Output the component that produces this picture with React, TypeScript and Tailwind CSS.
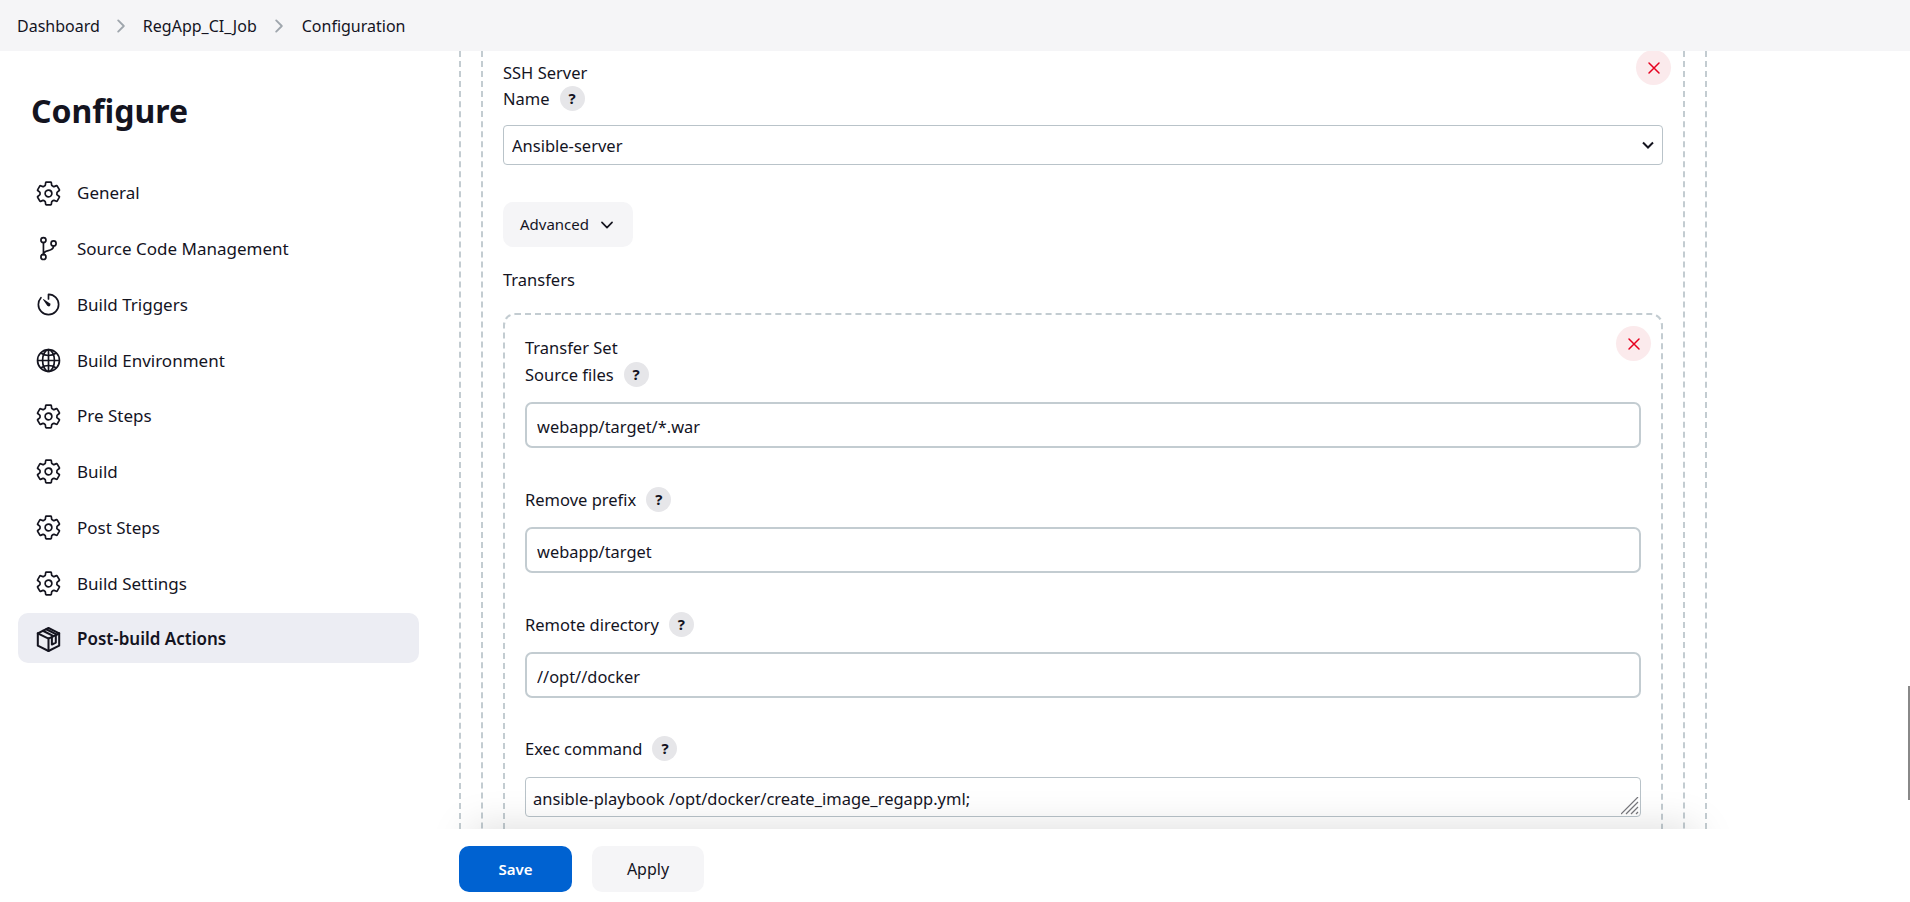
import {
  IoChevronDown,
  IoChevronForward,
  IoGitBranchOutline,
  IoGlobeOutline,
  IoSettingsOutline,
  IoTimerOutline,
} from "react-icons/io5";
import type { ReactNode } from "react";

const PackageIcon = () => (
  <svg viewBox="0 0 24 24" className="w-[27px] h-[27px] shrink-0" fill="none" stroke="currentColor" strokeWidth="1.8" strokeLinejoin="round" strokeLinecap="round">
    <path d="M12 1.8 21.5 6.5v11L12 22.2 2.5 17.5v-11z" />
    <path d="M2.5 6.5 12 11.2l9.5-4.7M12 11.2v11" />
    <path d="M7 4.2l9.5 4.8M10 2.9l9.5 4.7" />
    <path d="M15 10v6.5l3.5-1.8V8.2" />
  </svg>
);

const iconClass = "shrink-0";

const items: { label: string; icon: ReactNode; active?: boolean }[] = [
  { label: "General", icon: <IoSettingsOutline size={27} className={iconClass} /> },
  { label: "Source Code Management", icon: <IoGitBranchOutline size={27} className={iconClass} /> },
  { label: "Build Triggers", icon: <IoTimerOutline size={27} className={iconClass} /> },
  { label: "Build Environment", icon: <IoGlobeOutline size={27} className={iconClass} /> },
  { label: "Pre Steps", icon: <IoSettingsOutline size={27} className={iconClass} /> },
  { label: "Build", icon: <IoSettingsOutline size={27} className={iconClass} /> },
  { label: "Post Steps", icon: <IoSettingsOutline size={27} className={iconClass} /> },
  { label: "Build Settings", icon: <IoSettingsOutline size={27} className={iconClass} /> },
  { label: "Post-build Actions", icon: <PackageIcon />, active: true },
];

const Help = () => (
  <span className="ml-[10px] mb-[2px] w-[25px] h-[25px] rounded-full bg-[#e6e6e9] flex items-center justify-center text-[15px] font-bold">?</span>
);

const Label = ({ text }: { text: string }) => (
  <div className="flex items-center h-[26px]">
    {text}
    <Help />
  </div>
);

const Close = ({ className }: { className: string }) => (
  <button className={`absolute w-[35px] h-[35px] rounded-full bg-[#fbeaec] text-[#e6001f] flex items-center justify-center ${className}`}>
    <svg viewBox="0 0 14 14" className="w-[14px] h-[14px]" fill="none" stroke="currentColor" strokeWidth="1.5" strokeLinecap="round">
      <path d="M2 2l10 10M12 2 2 12" />
    </svg>
  </button>
);

const Field = ({ label, value, className = "" }: { label: string; value: string; className?: string }) => (
  <div className={className}>
    <Label text={label} />
    <input
      readOnly
      value={value}
      className="mt-[14px] w-full h-[46px] border-2 border-[#c3ccd1] rounded-[7px] px-[10px] pt-[2px] text-[16.4px] outline-none bg-white"
    />
  </div>
);

export default function App() {
  return (
    <div className="relative h-screen flex flex-col overflow-hidden bg-white text-[#14141f] text-[16.5px] font-['Noto_Sans','Open_Sans',sans-serif]">
      <header className="relative z-20 h-[51px] shrink-0 bg-[#f5f5f7] flex items-center pl-[17px] text-[16px]">
        <span>Dashboard</span>
        <span className="w-[43px] flex justify-center text-[#9fa6ad]">
          <IoChevronForward size={20} />
        </span>
        <span>RegApp_CI_Job</span>
        <span className="w-[45px] flex justify-center text-[#9fa6ad]">
          <IoChevronForward size={20} />
        </span>
        <span>Configuration</span>
      </header>

      <div className="flex flex-1 min-h-0">
        <aside className="w-[459px] shrink-0 pl-[18px] pr-[40px]">
          <h1 className="mt-[38px] ml-[13px] h-[44px] leading-[44px] text-[32px] font-bold">Configure</h1>
          <nav className="mt-[34px] flex flex-col gap-[5.75px] text-[17px]">
            {items.map((item) => (
              <div
                key={item.label}
                className={`h-[50px] pt-[2px] rounded-[10px] flex items-center pl-[18px] gap-[17px] ${item.active ? "bg-[#ecedf3] font-semibold" : ""}`}
              >
                <span className="w-6 h-6 flex items-center justify-center">{item.icon}</span>
                {item.label}
              </div>
            ))}
          </nav>
        </aside>

        <main className="w-[1248px] h-full overflow-hidden border-x-2 border-dashed border-[#c3ccd1] px-[20px]">
          <div className="relative min-h-full border-x-2 border-dashed border-[#c3ccd1] px-[20px] pt-[9px] pb-[200px]">
            <Close className="right-[12px] -top-[1px]" />
            <div className="h-[26px] leading-[26px]">SSH Server</div>
            <Label text="Name" />
            <div className="relative mt-[13px]">
              <select className="w-full h-[40px] border border-[#b9c3c9] rounded-[4px] px-[8px] pt-[3px] appearance-none outline-none bg-white">
                <option>Ansible-server</option>
              </select>
              <svg viewBox="0 0 12 8" className="absolute right-[9px] top-[16px] w-[12px] h-[8px]" fill="none" stroke="currentColor" strokeWidth="2">
                <path d="M1 1.5l5 5 5-5" />
              </svg>
            </div>
            <button className="mt-[37px] w-[130px] h-[45px] rounded-[10px] bg-[#f5f5f7] flex items-center pl-[17px] gap-[9px] text-[15px]">
              Advanced
              <IoChevronDown size={18} />
            </button>
            <div className="mt-[20px] h-[26px] leading-[26px]">Transfers</div>

            <section className="relative mt-[20px] border-2 border-dashed border-[#c3ccd1] rounded-[12px] px-[20px] pt-[20px] pb-[100px]">
              <Close className="right-[10px] top-[11px]" />
              <div className="h-[26px] leading-[26px]">Transfer Set</div>
              <Field label="Source files" value="webapp/target/*.war" className="mt-[1px]" />
              <Field label="Remove prefix" value="webapp/target" className="mt-[39px]" />
              <Field label="Remote directory" value="//opt//docker" className="mt-[39px]" />
              <div className="mt-[38px]">
                <Label text="Exec command" />
                <div className="relative mt-[15px]">
                  <textarea
                    readOnly
                    rows={1}
                    value="ansible-playbook /opt/docker/create_image_regapp.yml;"
                    className="block w-full h-[40px] border border-[#b9c3c9] rounded-[4px] px-[7px] pt-[9px] resize-none outline-none overflow-hidden"
                  />
                  <svg viewBox="0 0 18 18" className="absolute right-[2px] bottom-[2px] w-[18px] h-[18px]" stroke="#77777c" strokeWidth="1.2">
                    <path d="M0 17 17 0M5 17 17 5M10 17l7-7M15 17l2-2" />
                  </svg>
                </div>
              </div>
            </section>
          </div>
        </main>
      </div>

      <footer className="relative z-20 h-[73px] shrink-0 bg-white flex items-start pl-[459px] pt-[17px] gap-[20px]">
        <div className="absolute bottom-full left-0 right-0 h-[50px] overflow-hidden pointer-events-none">
          <div className="absolute left-[470px] w-[1226px] top-[50px] h-[40px] shadow-[0_0_40px_rgba(0,0,0,0.15)]" />
        </div>
        <button className="w-[113px] h-[46px] rounded-[10px] bg-[#0062d1] text-white font-semibold text-[15px]">Save</button>
        <button className="w-[112px] h-[46px] rounded-[10px] bg-[#f5f5f7] text-[16px]">Apply</button>
      </footer>

      <div className="absolute right-0 top-[686px] w-[2px] h-[114px] bg-[#888]" />
    </div>
  );
}
